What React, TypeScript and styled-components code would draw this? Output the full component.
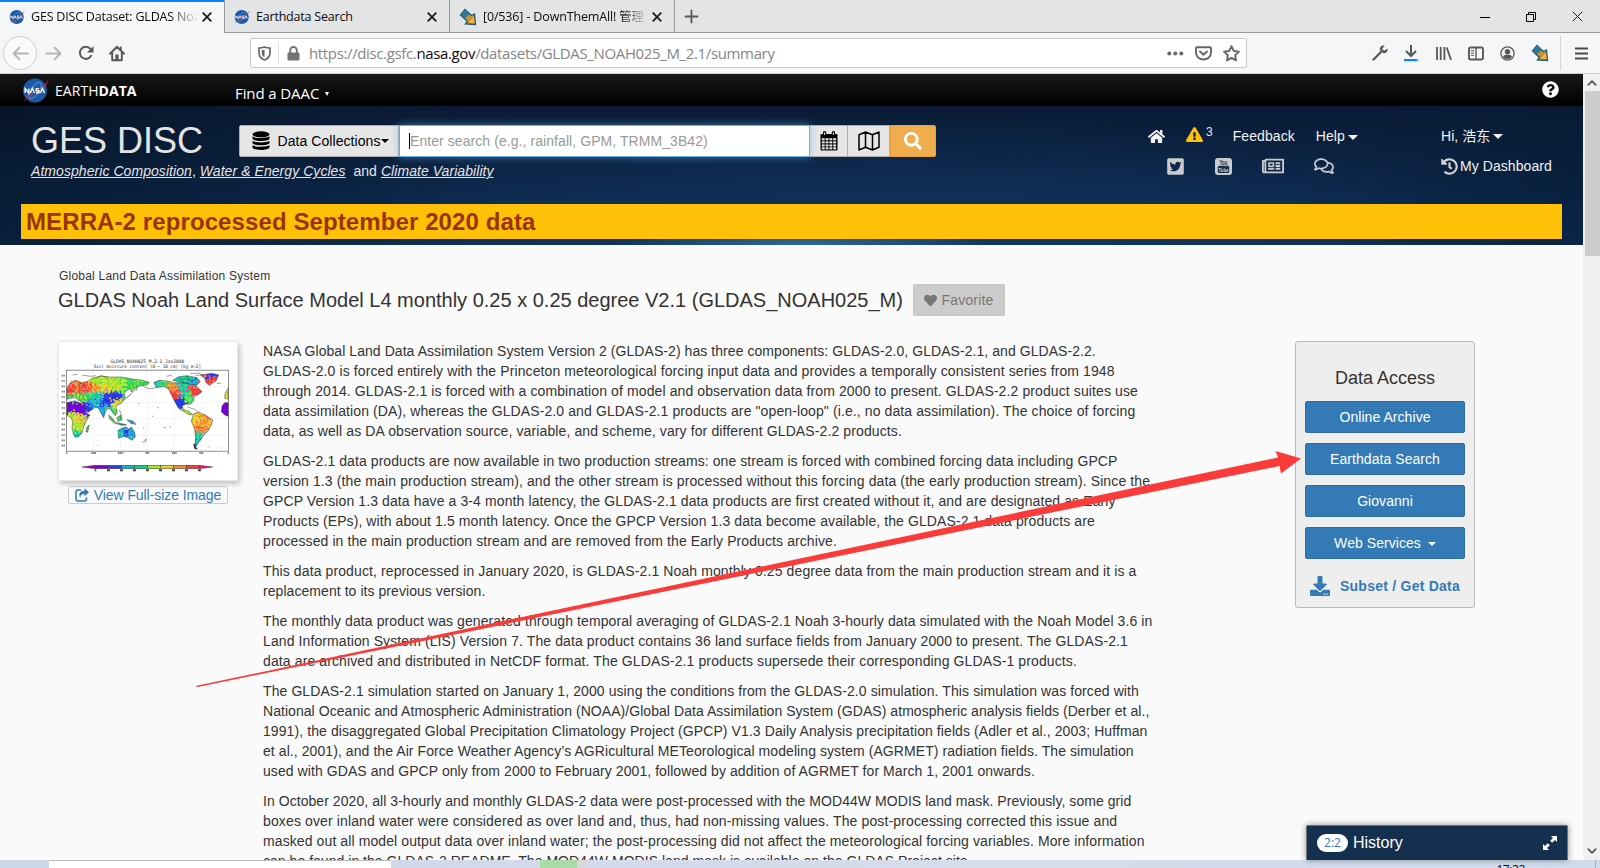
import React from "react";
import styled, { createGlobalStyle, css } from "styled-components";
import {
  FaDownload,
  FaExclamationTriangle,
  FaHeart,
  FaHistory,
  FaHome,
  FaQuestionCircle,
  FaRegComments,
  FaRegNewspaper,
  FaSearch,
  FaTwitterSquare,
} from "react-icons/fa";

const ARIAL = `"Liberation Sans", "Noto Sans CJK SC", sans-serif`;
const CHROME = `"Open Sans", "Noto Sans CJK SC", sans-serif`;

const Global = createGlobalStyle`
  * { box-sizing: border-box; }
  html, body { margin: 0; padding: 0; overflow: hidden; }
  body { font-family: ${ARIAL}; font-size: 14px; line-height: 20px; color: #333; }
  svg { display: block; flex: none; }
  p { margin: 0; }
`;

const Window = styled.div`
  width: 1600px;
  height: 868px;
  display: flex;
  flex-direction: column;
  overflow: hidden;
  background: #f5f6f7;
`;

/* ---------- browser chrome ---------- */

const TabStrip = styled.div`
  height: 33px;
  flex: none;
  display: flex;
  background: #e3e4e6;
  box-shadow: inset 0 -1px #98999b;
  font-family: ${CHROME};
`;

const Tab = styled.div<{ $w: number; $active?: boolean }>`
  width: ${(p) => p.$w}px;
  height: 33px;
  display: flex;
  align-items: center;
  padding: 1px 12px 0 9px;
  border-right: 1px solid #98999b;
  color: #0c0c0d;
  ${(p) =>
    p.$active &&
    css`
      background: #f5f6f7;
      box-shadow: inset 0 2px #0a84ff;
    `}
`;

const TabTitle = styled.span<{ $track: number; $fade?: boolean }>`
  flex: 1;
  min-width: 0;
  margin: 0 4px 0 6px;
  overflow: hidden;
  white-space: nowrap;
  font-size: 12.5px;
  letter-spacing: ${(p) => p.$track}px;
  ${(p) => p.$fade && css`mask-image: linear-gradient(to right, #000 calc(100% - 28px), transparent);`}
`;

const NewTab = styled.div`
  display: flex;
  align-items: center;
  padding-left: 9px;
`;

const WindowButtons = styled.div`
  margin-left: auto;
  display: flex;
  align-items: center;
  gap: 36px;
  padding-right: 17px;
`;

const Toolbar = styled.div`
  height: 41px;
  flex: none;
  display: flex;
  align-items: center;
  padding-left: 3px;
  background: #f5f6f7;
  border-bottom: 1px solid #ccc;
`;

const BackButton = styled.div`
  width: 34px;
  height: 34px;
  border: 1px solid #d0d0d2;
  border-radius: 50%;
  background: #fafafb;
  display: flex;
  align-items: center;
  justify-content: center;
`;

const NavIcons = styled.div`
  display: flex;
  align-items: center;
  gap: 15.5px;
  margin-left: 8px;
  width: 205px;
`;

const UrlBox = styled.div`
  width: 997px;
  height: 30px;
  display: flex;
  align-items: center;
  border: 1px solid #c8c8ca;
  border-radius: 2px;
  background: #fff;
  padding: 0 6px 0 7px;
  font-family: ${CHROME};
`;

const UrlDivider = styled.i`
  width: 1px;
  height: 22px;
  background: #e0e0e2;
  margin: 0 8px 0 7px;
`;

const Url = styled.span`
  flex: 1;
  margin-left: 9px;
  padding-bottom: 1px;
  font-size: 15px;
  letter-spacing: -0.36px;
  color: #858587;
  white-space: nowrap;
  b { color: #0c0c0d; font-weight: 400; }
`;

const UrlActions = styled.div`
  display: flex;
  align-items: center;
  gap: 11px;
`;

const ToolIcons = styled.div`
  margin-left: auto;
  display: flex;
  align-items: center;
  gap: 16px;
`;

const MenuButton = styled.div`
  height: 34px;
  border-left: 1px solid #d5d5d8;
  padding: 0 12px 0 14px;
  margin-left: -5px;
  display: flex;
  align-items: center;
`;

/* ---------- page ---------- */

const Viewport = styled.div`
  height: 786px;
  flex: none;
  display: flex;
  overflow: hidden;
`;

const Page = styled.div`
  width: 1583px;
  background: #fafafa;
  display: flex;
  flex-direction: column;
  overflow: hidden;
`;

const ScrollBar = styled.div`
  width: 17px;
  background: #f0f0f0;
  display: flex;
  flex-direction: column;
  align-items: center;
  padding: 3px 0 3px 1px;
`;

const ScrollThumb = styled.div`
  width: 15px;
  height: 165px;
  margin: 2px 0 auto;
  background: #cdcdcd;
`;

const EarthBar = styled.div`
  height: 32px;
  flex: none;
  display: flex;
  align-items: center;
  padding: 1px 24px 0 22px;
  background: linear-gradient(#181818, #000);
  color: #fff;
  font-family: ${CHROME};
  > svg:last-child { margin-bottom: 3px; }
`;

const Brand = styled.span`
  width: 180px;
  margin-left: 6px;
  font-size: 14px;
  letter-spacing: 0.05px;
`;

const Daac = styled.span`
  display: flex;
  align-items: center;
  gap: 6px;
  flex: 1;
  font-size: 15px;
  letter-spacing: -0.1px;
  padding-top: 4px;
`;

const Caret = styled.i<{ $s?: number; $gap?: number }>`
  display: inline-block;
  width: 0;
  height: 0;
  vertical-align: middle;
  margin-left: ${(p) => p.$gap ?? 0}px;
  border-top: ${(p) => p.$s ?? 4}px solid currentColor;
  border-left: ${(p) => p.$s ?? 4}px solid transparent;
  border-right: ${(p) => p.$s ?? 4}px solid transparent;
`;

const DaacCaret = styled(Caret)`
  margin-top: 2px;
  border-width: 4px 2.5px 0;
`;

const Header = styled.header`
  height: 139px;
  flex: none;
  display: flex;
  flex-direction: column;
  justify-content: space-between;
  padding: 19px 21px 6px;
  color: #fff;
  background:
    radial-gradient(ellipse 190px 34px at 800px 142px, rgba(58, 124, 170, 0.75), transparent),
    radial-gradient(ellipse 640px 130px at 900px 139px, rgba(28, 74, 130, 0.4), transparent),
    linear-gradient(100deg, rgba(0, 10, 20, 0.35), transparent 30%, transparent 85%, rgba(0, 20, 40, 0.3)),
    linear-gradient(#0a1c36, #0d2c54);
`;

const HeaderRow = styled.div`
  display: flex;
`;

const SiteColumn = styled.div`
  width: 1127px;
  padding-left: 10px;
`;

const SearchRow = styled.div`
  display: flex;
  height: 32px;
`;

const SiteName = styled.h1`
  width: 208px;
  margin: 0;
  font-size: 36px;
  line-height: 32px;
  font-weight: 400;
  color: #e4e4e4;
`;

const SearchButton = styled.div<{ $w: number; $primary?: boolean }>`
  width: ${(p) => p.$w}px;
  display: flex;
  align-items: center;
  justify-content: center;
  letter-spacing: 0.07px;
  color: ${(p) => (p.$primary ? "#fff" : "#000")};
  background: ${(p) => (p.$primary ? "#f0ad4e" : "#e6e6e6")};
  border: 1px solid ${(p) => (p.$primary ? "#eea236" : "#adadad")};
  border-left-width: ${(p) => (p.$primary ? 1 : 0)}px;
  &:first-of-type { border-left-width: 1px; border-radius: 2px 0 0 2px; padding-left: 3px; }
  &:last-of-type { border-radius: 0 2px 2px 0; }
  svg + span { margin-left: 7px; }
`;

const SearchField = styled.div`
  width: 411px;
  position: relative;
  background: #fff;
  border: 1px solid #66afe9;
  box-shadow: 0 0 8px rgba(102, 175, 233, 0.6);
  padding: 5px 9px;
  color: #999;
  letter-spacing: 0.07px;
  display: flex;
  align-items: center;
`;

const TextCursor = styled.i`
  width: 1px;
  height: 16px;
  background: #000;
`;

const Tagline = styled.div`
  margin-top: 4px;
  white-space: pre;
  color: #e4e4e4;
  letter-spacing: 0.06px;
  a { font-style: italic; text-decoration: underline; }
`;

const LinkColumn = styled.div`
  width: 293px;
  display: flex;
  flex-direction: column;
  gap: 10px;
  padding-top: 1px;
`;

const LinkRow = styled.div<{ $gap: number; $indent?: number }>`
  display: flex;
  align-items: center;
  height: 20px;
  gap: ${(p) => p.$gap}px;
  padding-left: ${(p) => p.$indent ?? 0}px;
  color: #f2f2f2;
  letter-spacing: 0.07px;
`;

const SocialRow = styled(LinkRow)`
  color: #c9cbce;
`;

const AlertCount = styled.span`
  display: flex;
  gap: 3px;
  font-size: 12px;
  line-height: 12px;
  color: #e4e4e4;
  margin: -4px -1px 0 0;
  svg { color: #ffc107; }
`;

const UserColumn = styled(LinkColumn)`
  width: 120px;
`;

const Notice = styled.div`
  height: 35px;
  padding-left: 5px;
  background: #ffc107;
  color: #993300;
  font-size: 24px;
  line-height: 35px;
  letter-spacing: 0.1px;
  font-weight: 700;
`;

const Content = styled.main`
  flex: 1;
  padding: 21px 0 0 58px;
`;

const Project = styled.div`
  font-size: 12px;
  letter-spacing: 0.22px;
  padding-left: 1px;
`;

const TitleRow = styled.div`
  display: flex;
  align-items: center;
  margin-top: -2px;
  height: 32px;
`;

const Title = styled.h2`
  width: 855px;
  margin: 0;
  font-size: 20px;
  font-weight: 400;
  white-space: nowrap;
`;

const Favorite = styled.div`
  width: 92px;
  height: 32px;
  display: flex;
  align-items: center;
  justify-content: center;
  gap: 4px;
  background: #ccc;
  border: 1px solid #c6c6c6;
  border-radius: 1px;
  color: #777;
  letter-spacing: 0.2px;
`;

const Columns = styled.div`
  display: flex;
  align-items: flex-start;
  margin-top: 25px;
`;

const Preview = styled.div`
  width: 205px;
`;

const PreviewCard = styled.div`
  width: 180px;
  height: 140px;
  background: #fff;
  border: 1px solid #e8e8e8;
  box-shadow: 2px 3px 5px rgba(0, 0, 0, 0.22);
`;

const PreviewLink = styled.div`
  width: 160px;
  height: 18px;
  margin: 5px 0 0 10px;
  display: flex;
  align-items: center;
  justify-content: center;
  gap: 5px;
  border: 1px solid #ccc;
  border-radius: 2px;
  color: #337ab7;
  letter-spacing: -0.07px;
`;

const Description = styled.div`
  width: 1032px;
  white-space: pre;
  p + p { margin-top: 10px; }
`;

const Line = styled.span<{ $track: number }>`
  display: block;
  letter-spacing: ${(p) => p.$track}px;
`;

const AccessPanel = styled.aside`
  width: 180px;
  height: 267px;
  display: flex;
  flex-direction: column;
  gap: 10px;
  padding: 26px 9px 0;
  background: #eee;
  border: 1px solid #bbb;
  border-radius: 3px;
`;

const AccessTitle = styled.h3`
  margin: 0 0 3px;
  font-size: 18px;
  font-weight: 400;
  text-align: center;
`;

const AccessButton = styled.div`
  height: 32px;
  line-height: 31px;
  text-align: center;
  letter-spacing: 0.06px;
  color: #fff;
  background: #337ab7;
  border: 1px solid #2e6da4;
  border-radius: 2px;
`;

const SubsetLink = styled.div`
  display: flex;
  align-items: center;
  gap: 10px;
  margin-top: 7px;
  padding-left: 5px;
  color: #337ab7;
  font-weight: 700;
  letter-spacing: 0.24px;
  white-space: nowrap;
`;

const HistoryPanel = styled.div`
  position: absolute;
  left: 1306px;
  top: 825px;
  width: 262px;
  height: 35px;
  display: flex;
  align-items: center;
  padding: 0 9px 1px 10px;
  background: #15304f;
  border: 1px solid #6e7275;
  border-bottom: 0;
  border-radius: 2px 2px 0 0;
  box-shadow: 0 0 6px rgba(0, 0, 0, 0.4);
  color: #fff;
  font-size: 16px;
  > span { flex: 1; }
`;

const HistoryBadge = styled.b`
  width: 31px;
  height: 18px;
  margin-right: 5px;
  border-radius: 9px;
  background: #fff;
  color: #337ab7;
  font: 400 12px/18px "Open Sans", sans-serif;
  text-align: center;
`;

const ArrowOverlay = styled.svg`
  position: absolute;
  left: 0;
  top: 0;
  pointer-events: none;
`;

const TaskBar = styled.div`
  height: 8px;
  flex: none;
  display: flex;
  background: linear-gradient(90deg, #ccd7ea, #d6dcec 60%, #d0dcec);
  padding-left: 49px;
  overflow: hidden;
`;

const TaskItem = styled.div<{ $w: number; $c: string; $line?: boolean }>`
  width: ${(p) => p.$w}px;
  background: ${(p) => p.$c};
  border-top: ${(p) => (p.$line ? "1px solid #bbb" : "0")};
`;

const Clock = styled.span`
  margin-left: auto;
  margin-right: 4px;
  padding-right: 70px;
  border-right: 1px solid #a5afc0;
  font: 12px/14px "Open Sans", sans-serif;
  letter-spacing: -0.4px;
  color: #111;
  padding-top: 3px;
`;

/* ---------- icons ---------- */

const CloseX = ({ size = 10, w = 1.8 }: { size?: number; w?: number }) => (
  <svg width={size} height={size} viewBox="0 0 10 10" stroke="#1c1c1e" strokeWidth={w} fill="none">
    <path d="M.7.7l8.6 8.6M9.3.7L.7 9.3" />
  </svg>
);

const NasaLogo = ({ size }: { size: number }) => (
  <svg width={size} height={size} viewBox="0 0 26 26">
    <circle cx="12.5" cy="13" r="11.5" fill="#1a5aa8" />
    <ellipse cx="12.5" cy="13" rx="9" ry="4" fill="none" stroke="#8db4dd" strokeWidth=".6" transform="rotate(-55 12.5 13)" />
    <path d="M1 24C5 18 9 15.500 14 14 19 12 22 7 26 2 23 9 19 14 14 15.300 9 16.500 6 19 1 24z" fill="#e0283c" opacity=".85" />
    <path d="M3 15.500V11l3.500 4.500V11M8 15.500l2-4.500 2 4.500M16.300 11.200h-2.600v2h2.600v2h-2.800M17.700 15.500l2-4.500 2 4.500" fill="none" stroke="#fff" strokeWidth="1.300" />
  </svg>
);

const DtaArrow = () => (
  <svg width="18" height="18" viewBox="0 0 18 18">
    <path d="M6 1.500l6.500 6L15.500 6l1 10.500L6.500 16 8.500 13.500 1.500 7z" fill="#c98f3a" stroke="#1f5670" strokeWidth="1.300" />
    <path d="M6 1.500l4.500 4.200L5.500 10.500 1.500 7z" fill="#2c7a98" />
    <path d="M9.500 14.500l6 .8-.6-6.500z" fill="#ffb52e" />
  </svg>
);

const Glyph = ({ d, size = 17, w = 1.8, color = "#58585a" }: { d: string; size?: number; w?: number; color?: string }) => (
  <svg width={size} height={size} viewBox="0 0 16 16" fill="none" stroke={color} strokeWidth={w} strokeLinecap="round" strokeLinejoin="round">
    <path d={d} />
  </svg>
);

const Reload = () => (
  <svg width="16" height="16" viewBox="0 0 16 16" fill="none" stroke="#58585a" strokeWidth="2">
    <path d="M13.500 10A6 6 0 1 1 12.500 4" />
    <path d="M15.500 1v6.500H9z" fill="#58585a" stroke="none" />
  </svg>
);

const HomeOutline = () => (
  <svg width="16" height="17" viewBox="0 0 16 17">
    <path d="M1 8.700L8 1.800l7 6.900M3.200 7v8.200h9.600V7M11.800 2.500v3" fill="none" stroke="#58585a" strokeWidth="1.900" strokeLinejoin="round" strokeLinecap="round" />
    <path d="M6.400 9.500h3.200V15H6.400z" fill="#58585a" />
  </svg>
);

const Shield = () => (
  <svg width="13" height="15" viewBox="0 0 13 15">
    <path d="M6.500 1C4.500 1.800 3 2 1 2v4.500C1 10 3 12.700 6.500 14 10 12.700 12 10 12 6.500V2C10 2 8.500 1.800 6.500 1z" fill="none" stroke="#66666a" strokeWidth="1.700" />
    <path d="M6.500 3.600c-1 .4-1.700.5-2.800.6v2.500c0 2.100 1 3.700 2.800 4.700z" fill="#66666a" />
  </svg>
);

const Lock = () => (
  <svg width="13" height="15" viewBox="0 0 13 15">
    <rect x=".5" y="6.500" width="12" height="8" rx="1.300" fill="#737376" />
    <path d="M3.200 7V4.300a3.300 3.300 0 0 1 6.600 0V7" fill="none" stroke="#737376" strokeWidth="2" />
  </svg>
);

const Pocket = () => (
  <svg width="17" height="15" viewBox="0 0 17 15" fill="none" stroke="#68686b" strokeWidth="1.900">
    <path d="M2 1.200h13q1 0 1 1V6.500a7.500 7 0 0 1-15 0V2.200q0-1 1-1z" />
    <path d="M5 5.500l3.500 3.200L12 5.500" strokeLinecap="round" strokeLinejoin="round" />
  </svg>
);

const Wrench = () => (
  <svg width="16" height="16" viewBox="0 0 16 16">
    <path d="M1.500 14.500L9 7" stroke="#58585a" strokeWidth="2.300" strokeLinecap="round" />
    <path d="M15.500 3.500l-2.700 2-2-.4-.3-1.900 2.200-2.500C9.800-.2 7.400 2 7.800 4.800l3.600 3.500c3 .3 4.800-2.200 4.100-4.800z" fill="#58585a" />
  </svg>
);

const DownloadArrow = () => (
  <svg width="16" height="18" viewBox="0 0 16 18">
    <path d="M7 1v11M2 7l5 5 5-5" fill="none" stroke="#58585a" strokeWidth="2" />
    <path d="M0 15h13v2.200H0z" fill="#0a84ff" />
    <path d="M13 15h2v2.200h-2z" fill="#ccc" />
  </svg>
);

const Library = () => (
  <svg width="16" height="15" viewBox="0 0 16 15" stroke="#58585a" strokeWidth="1.800">
    <path d="M1 1v13M4.700 1v13M8.400 1v13M10.800 1.500l4.200 12.500" />
  </svg>
);

const Sidebar = () => (
  <svg width="16" height="15" viewBox="0 0 16 15" fill="none" stroke="#58585a">
    <rect x="1" y="1.500" width="14" height="12" rx="1.500" strokeWidth="1.900" />
    <path d="M8 1.500v12" strokeWidth="1.400" />
    <path d="M3 4.700h3M3 7h3M3 9.300h3" strokeWidth="1" />
  </svg>
);

const Account = () => (
  <svg width="15" height="15" viewBox="0 0 15 15">
    <circle cx="7.500" cy="7.500" r="6.600" fill="none" stroke="#58585a" strokeWidth="1.300" />
    <circle cx="7.500" cy="5.800" r="2.700" fill="#58585a" />
    <path d="M2.800 10.500C4 9 6 8.800 7.500 8.800s3.500.2 4.700 1.700A5.400 5.400 0 0 1 7.500 13a5.400 5.400 0 0 1-4.700-2.500z" fill="#58585a" />
  </svg>
);

const Database = () => (
  <svg width="18" height="20" viewBox="0 0 18 20">
    <ellipse cx="9" cy="3.300" rx="8.500" ry="3" />
    <path d="M.5 5.300c2 2.300 15 2.300 17 0v2.400c-1 3-16 3-17 0z" />
    <path d="M.5 9.700c2 2.300 15 2.300 17 0v2.400c-1 3-16 3-17 0z" />
    <path d="M.5 14.100c2 2.300 15 2.300 17 0v2.400c-1 3.300-16 3.300-17 0z" />
  </svg>
);

const Calendar = () => (
  <svg width="18" height="20" viewBox="0 0 18 20">
    <path d="M1.500 3h15q1 0 1 1v14.500q0 1-1 1h-15q-1 0-1-1V4q0-1 1-1z" />
    <path d="M3.500.8h2.200v4H3.500zM12.300.8h2.200v4h-2.200z" stroke="#000" />
    <path d="M4.600 1.500v2.500M13.400 1.500v2.500" stroke="#e6e6e6" />
    <g fill="#e6e6e6">
      {[7.2, 10.3, 13.4, 16.3].map((y) =>
        [1.8, 5.6, 9.4, 13.2].map((x) => <rect key={`${x}${y}`} x={x} y={y} width="2.900" height="2.100" />)
      )}
    </g>
  </svg>
);

const FoldedMap = () => (
  <svg width="22" height="20" viewBox="0 0 22 20" fill="none" stroke="#000" strokeWidth="1.500" strokeLinejoin="round">
    <path d="M1 3.700L7.500 1 14.500 3.700 21 1v15.300L14.500 19 7.500 16.300 1 19zM7.500 1v15.300M14.500 3.700V19" />
  </svg>
);

const YouTubeSquare = () => (
  <svg width="17" height="17" viewBox="0 0 17 17">
    <rect width="17" height="17" rx="3" fill="#c9cbce" />
    <rect x="2.800" y="7.800" width="11.400" height="7.200" rx="1.500" fill="#18304f" />
    <text x="8.500" y="6.900" fontSize="6.500" fontWeight="700" textAnchor="middle" textLength="8" lengthAdjust="spacingAndGlyphs" fill="#18304f">You</text>
    <text x="8.500" y="13.800" fontSize="6.200" fontWeight="700" textAnchor="middle" textLength="10" lengthAdjust="spacingAndGlyphs" fill="#c9cbce">Tube</text>
  </svg>
);

const ShareSquare = () => (
  <svg width="14" height="14" viewBox="0 0 14 14">
    <path d="M6 2H3Q1 2 1 4v7q0 2 2 2h6.500q2 0 2-2V9.500" fill="none" stroke="#337ab7" strokeWidth="1.500" />
    <path d="M9.500.3L14 4.300 9.500 8.300V6C6.500 6 5.300 7 5.300 10 3 6 5 2.700 9.500 2.700z" fill="#337ab7" />
  </svg>
);

const ExpandArrows = () => (
  <svg width="16" height="16" viewBox="0 0 16 16" fill="#fff">
    <path d="M9 1h6v6l-2-2-2.800 2.800-2-2L11 3zM7 15H1V9l2 2 2.800-2.800 2 2L5 13z" />
  </svg>
);

/* ---------- soil moisture preview ---------- */

const LAND = [
  "34,195 60,189 75,196 84,196 88,210 96,228 104,232 98,242 90,255 84,270 80,285 70,297 60,299 54,290 50,270 52,255 48,240 34,233",
  "34,185 34,158 38,145 48,132 62,128 80,135 100,130 110,122 135,115 165,118 200,118 230,124 260,128 282,134 275,142 255,144 240,150 228,163 224,152 212,160 206,168 210,180 200,195 190,200 181,208 186,222 180,234 172,225 165,215 158,212 150,222 145,240 138,228 130,212 118,208 112,215 98,224 90,215 82,195 70,188 60,180 46,182",
  "188,278 200,272 212,268 220,275 228,268 238,285 240,298 230,308 218,300 205,296 190,302",
  "295,135 310,128 335,130 355,135 385,135 405,140 420,142 440,162 430,170 418,175 414,190 405,200 392,199 380,205 385,216 400,220 412,231 400,231 380,218 370,212 360,195 350,175 340,155 325,146 304,150",
  "435,112 470,107 490,112 482,130 462,143 452,135 448,122",
  "352,128 370,117 395,114 425,120 435,132 425,142 400,138 370,132",
  "415,228 430,224 450,232 472,247 468,262 458,280 445,292 435,308 427,318 419,332 421,300 418,275 408,250",
  "500,205 508,195 519,195 519,236 508,232 498,222",
  "509,168 519,150 519,185 508,182",
  "95,268 102,262 97,284 92,282",
  "160,232 170,240 180,254 174,252 164,242",
  "185,240 196,233 198,246 188,252",
  "215,246 232,250 242,260 228,258",
  "180,255 200,258 214,262 200,262",
];

const PALETTE = ["#7a00d8", "#2a3cf0", "#12a5e0", "#0bc8a8", "#35d84a", "#a4e620", "#e8d428", "#f58a28", "#f53a3a"];

// Wetness centres: x, y, palette index.
const CENTRES: [number, number, number][] = [
  [45, 212, 0], [75, 212, 0], [100, 212, 1], [66, 242, 6], [60, 265, 5], [66, 290, 3], [45, 232, 5],
  [45, 152, 8], [62, 142, 7], [85, 152, 8], [110, 146, 7], [140, 148, 6], [60, 172, 4], [92, 172, 4], [110, 192, 2],
  [120, 130, 5], [170, 128, 5], [190, 150, 5], [225, 135, 4], [265, 135, 4], [125, 172, 3], [155, 180, 1], [185, 172, 1],
  [150, 192, 1], [186, 195, 6], [138, 212, 2], [205, 160, 4], [172, 215, 4],
  [195, 285, 3], [213, 286, 1], [232, 285, 2], [230, 300, 3],
  [300, 138, 3], [325, 138, 4], [350, 150, 7], [357, 162, 8], [380, 145, 3], [405, 155, 8], [425, 160, 8], [400, 180, 4],
  [372, 188, 1], [375, 200, 1], [395, 165, 3], [400, 228, 5], [462, 115, 1], [470, 128, 8], [450, 125, 8],
  [385, 120, 3], [410, 130, 2], [425, 238, 6], [445, 245, 7], [440, 270, 7], [460, 258, 6], [430, 295, 3], [424, 315, 2],
  [510, 215, 0], [515, 165, 6],
];

const noise = (x: number, y: number) => {
  const n = Math.sin(x * 12.9898 + y * 78.233) * 43758.5453;
  return n - Math.floor(n);
};

const moistureCells = () => {
  const paths = PALETTE.map(() => "");
  for (let y = 104; y < 336; y += 4) {
    for (let x = 34; x < 519; x += 4) {
      const jx = x + (noise(x, y) - 0.5) * 20;
      const jy = y + (noise(y, x) - 0.5) * 16;
      let best = 0;
      let dist = Infinity;
      for (const [cx, cy, level] of CENTRES) {
        const d = (cx - jx) ** 2 + (cy - jy) ** 2 * 1.4;
        if (d < dist) {
          dist = d;
          best = level;
        }
      }
      const r = noise(x + 7, y + 3);
      const shift = best < 2 ? 0 : r < 0.16 ? -1 : r > 0.84 ? 1 : 0;
      const level = Math.max(0, Math.min(8, best + shift));
      paths[level] += `M${x} ${y}h4.300v4.300h-4.300z`;
    }
  }
  return paths;
};

const CELLS = moistureCells();

const SoilMap = () => (
  <svg width="178" height="138" viewBox="11 13 534 414">
    <defs>
      <clipPath id="land">
        {LAND.map((points) => (
          <polygon key={points} points={points} />
        ))}
      </clipPath>
    </defs>
    <g fontFamily="DejaVu Sans Mono" fontSize="14" fill="#333" textAnchor="middle">
      <text x="276" y="75" textLength="221" lengthAdjust="spacingAndGlyphs">GLDAS_NOAH025_M.2.1 Jan2000</text>
      <text x="276" y="90" textLength="322" lengthAdjust="spacingAndGlyphs">Soil moisture content (0 − 10 cm) [kg m−2]</text>
    </g>
    <path d="M114 98V340M195 98V340M276 98V340M357 98V340M438 98V340M34 146H518M34 195H518M34 243H518M34 292H518" stroke="#eee" strokeWidth="2" />
    <g clipPath="url(#land)">
      {CELLS.map((d, i) => (
        <path key={PALETTE[i]} d={d} fill={PALETTE[i]} />
      ))}
    </g>
    <g fill="none" stroke="#222" strokeWidth="1.600" opacity=".8">
      {LAND.map((points) => (
        <polygon key={points} points={points} />
      ))}
      <path d="M66 145l8-10 10 6-6 12M120 122l18-8 20 6M205 188l8-6 14-12M214 180l14-12 18-20-4 12M262 144q20 16 42 4M160 240l14 16 30 8M192 216l6 14 2 20M396 208l20 6 16 10M370 120l12 10 14-14 10 16 18-8M175 172l10 16 14-10M140 180l20 12 18-18M260 315l8-6 4-6-2 12M52 112l14-2M350 112l-16 4M405 108l30-2M484 138l14-2M80 112l26 4 16-2M440 110l-20 4" />
      <path d="M416 318l4 14 6 1" strokeWidth="5" stroke="#000" />
    </g>
    <path d="M305 210h5M262 270h5M325 270h7M248 198h4M460 328h4M126 323h3M342 268h5M290 236h4M496 331h4" stroke="#777" strokeWidth="2" />
    <rect x="33.500" y="97.500" width="486" height="243" fill="none" stroke="#555" strokeWidth="2" />
    <path d="M19 114h11M19 130h11M19 146h11M19 162h11M19 178h11M19 194h11M19 211h11M22 227h8M19 243h11M19 260h11M19 276h11M19 292h11M19 308h11M19 324h11" stroke="#777" strokeWidth="5" strokeDasharray="4 1.500" />
    <path d="M32 346h4M108 346h14M188 346h16M270 346h12M350 346h14M432 346h12M517 346h4" stroke="#555" strokeWidth="4" strokeDasharray="4 1" />
    <g stroke="#333" strokeWidth="1.500">
      <path d="M80 388l40-5v10z" fill="#9b00b0" />
      {["#7a00d8", "#2a3cf0", "#0bb4d0", "#0bd088", "#a4e620", "#e8d428", "#f58a28", "#f53a3a"].map((c, i) => (
        <rect key={c} x={120 + i * 39} y="383" width="39" height="10" fill={c} />
      ))}
      <path d="M472 388l-40-5v10z" fill="#f0107c" />
    </g>
    <path d="M118 398h5M155 398h9M194 398h9M233 398h9M272 398h9M311 398h9M350 398h9M389 398h9M428 398h9" stroke="#444" strokeWidth="6" />
  </svg>
);

/* ---------- content ---------- */

// Each line of the description with its letter spacing in pixels.
const PARAGRAPHS: [string, number][][] = [
  [
    ["NASA Global Land Data Assimilation System Version 2 (GLDAS-2) has three components: GLDAS-2.0, GLDAS-2.1, and GLDAS-2.2.", 0.06],
    ["GLDAS-2.0 is forced entirely with the Princeton meteorological forcing input data and provides a temporally consistent series from 1948", 0.1],
    ["through 2014. GLDAS-2.1 is forced with a combination of model and observation data from 2000 to present. GLDAS-2.2 product suites use", 0.107],
    ['data assimilation (DA), whereas the GLDAS-2.0 and GLDAS-2.1 products are "open-loop" (i.e., no data assimilation). The choice of forcing', 0.106],
    ["data, as well as DA observation source, variable, and scheme, vary for different GLDAS-2.2 products.", 0.112],
  ],
  [
    ["GLDAS-2.1 data products are now available in two production streams: one stream is forced with combined forcing data including GPCP", 0.077],
    ["version 1.3 (the main production stream), and the other stream is processed without this forcing data (the early production stream). Since the", 0.115],
    ["GPCP Version 1.3 data have a 3-4 month latency, the GLDAS-2.1 data products are first created without it, and are designated as Early", 0.107],
    ["Products (EPs), with about 1.5 month latency. Once the GPCP Version 1.3 data become available, the GLDAS-2.1 data products are", 0.09],
    ["processed in the main production stream and are removed from the Early Products archive.", 0.093],
  ],
  [
    ["This data product, reprocessed in January 2020, is GLDAS-2.1 Noah monthly 0.25 degree data from the main production stream and it is a", 0.107],
    ["replacement to its previous version.", 0.06],
  ],
  [
    ["The monthly data product was generated through temporal averaging of GLDAS-2.1 Noah 3-hourly data simulated with the Noah Model 3.6 in", 0.092],
    ["Land Information System (LIS) Version 7. The data product contains 36 land surface fields from January 2000 to present. The GLDAS-2.1", 0.1],
    ["data are archived and distributed in NetCDF format. The GLDAS-2.1 products supersede their corresponding GLDAS-1 products.", 0.117],
  ],
  [
    ["The GLDAS-2.1 simulation started on January 1, 2000 using the conditions from the GLDAS-2.0 simulation. This simulation was forced with", 0.092],
    ["National Oceanic and Atmospheric Administration (NOAA)/Global Data Assimilation System (GDAS) atmospheric analysis fields (Derber et al.,", 0.052],
    ["1991), the disaggregated Global Precipitation Climatology Project (GPCP) V1.3 Daily Analysis precipitation fields (Adler et al., 2003; Huffman", 0.087],
    ["et al., 2001), and the Air Force Weather Agency’s AGRicultural METeorological modeling system (AGRMET) radiation fields. The simulation", 0.075],
    ["used with GDAS and GPCP only from 2000 to February 2001, followed by addition of AGRMET for March 1, 2001 onwards.", 0.072],
  ],
  [
    ["In October 2020, all 3-hourly and monthly GLDAS-2 data were post-processed with the MOD44W MODIS land mask. Previously, some grid", 0.056],
    ["boxes over inland water were considered as over land and, thus, had non-missing values. The post-processing corrected this issue and", 0.13],
    ["masked out all model output data over inland water; the post-processing did not affect the meteorological forcing variables. More information", 0.1],
    ["can be found in the GLDAS-2 README. The MOD44W MODIS land mask is available on the GLDAS Project site.", 0.03],
  ],
];

const BrowserChrome = () => (
  <>
    <TabStrip>
      <Tab $w={225} $active>
        <NasaLogo size={16} />
        <TabTitle $track={-0.2} $fade>GES DISC Dataset: GLDAS Noah</TabTitle>
        <CloseX />
      </Tab>
      <Tab $w={225}>
        <NasaLogo size={16} />
        <TabTitle $track={-0.2}>Earthdata Search</TabTitle>
        <CloseX />
      </Tab>
      <Tab $w={225}>
        <DtaArrow />
        <TabTitle $track={-0.15} $fade>[0/536] - DownThemAll! 管理</TabTitle>
        <CloseX />
      </Tab>
      <NewTab>
        <Glyph d="M8 1.500v13M1.500 8h13" size={15} w={1.9} />
      </NewTab>
      <WindowButtons>
        <svg width="10" height="10"><path d="M0 5.500h10" stroke="#000" /></svg>
        <svg width="10" height="10" fill="none" stroke="#000">
          <path d="M.5 2.500h7v7h-7zM2.500 2.500v-2h7v7h-2" />
        </svg>
        <CloseX w={0.9} size={11} />
      </WindowButtons>
    </TabStrip>
    <Toolbar>
      <BackButton>
        <Glyph d="M15 8H1.500M7 2.500L1.500 8 7 13.500" color="#b4b4b6" />
      </BackButton>
      <NavIcons>
        <Glyph d="M1 8h13.500M9 2.500L14.500 8 9 13.500" color="#b4b4b6" />
        <Reload />
        <HomeOutline />
      </NavIcons>
      <UrlBox>
        <Shield />
        <UrlDivider />
        <Lock />
        <Url>
          https://disc.gsfc.<b>nasa.gov</b>/datasets/GLDAS_NOAH025_M_2.1/summary
        </Url>
        <UrlActions>
          <svg width="17" height="5" fill="#68686b">
            <circle cx="2.300" cy="2.500" r="2" />
            <circle cx="8.300" cy="2.500" r="2" />
            <circle cx="14.300" cy="2.500" r="2" />
          </svg>
          <Pocket />
          <Glyph d="M8 1l2.100 4.600 4.900.6-3.600 3.400.9 4.900L8 12.100l-4.300 2.400.9-4.900L1 6.200l4.900-.6z" color="#68686b" />
        </UrlActions>
      </UrlBox>
      <ToolIcons>
        <Wrench />
        <DownloadArrow />
        <Library />
        <Sidebar />
        <Account />
        <DtaArrow />
        <MenuButton>
          <svg width="13" height="13" stroke="#4a4a4c" strokeWidth="2">
            <path d="M0 1.500h13M0 6.500h13M0 11.500h13" />
          </svg>
        </MenuButton>
      </ToolIcons>
    </Toolbar>
  </>
);

const SiteHeader = () => (
  <Header>
    <HeaderRow>
      <SiteColumn>
        <SearchRow>
          <SiteName>GES DISC</SiteName>
          <SearchButton $w={160}>
            <Database />
            <span>Data Collections</span>
            <Caret />
          </SearchButton>
          <SearchField>
            <TextCursor />
            Enter search (e.g., rainfall, GPM, TRMM_3B42)
          </SearchField>
          <SearchButton $w={38}>
            <Calendar />
          </SearchButton>
          <SearchButton $w={42}>
            <FoldedMap />
          </SearchButton>
          <SearchButton $w={46} $primary>
            <FaSearch size={18} />
          </SearchButton>
        </SearchRow>
        <Tagline>
          <a>Atmospheric Composition</a>, <a>Water &amp; Energy Cycles</a>
          {"  and "}
          <a>Climate Variability</a>
        </Tagline>
      </SiteColumn>
      <LinkColumn>
        <LinkRow $gap={21}>
          <FaHome size={17} />
          <AlertCount>
            <FaExclamationTriangle size={17} />
            <span>3</span>
          </AlertCount>
          <span>Feedback</span>
          <span>
            Help
            <Caret $s={5} $gap={3} />
          </span>
        </LinkRow>
        <SocialRow $gap={30} $indent={18}>
          <FaTwitterSquare size={19} />
          <YouTubeSquare />
          <FaRegNewspaper size={22} />
          <FaRegComments size={20} />
        </SocialRow>
      </LinkColumn>
      <UserColumn>
        <LinkRow $gap={3}>
          <span>Hi, 浩东</span>
          <Caret $s={5} />
        </LinkRow>
        <LinkRow $gap={2}>
          <FaHistory size={17} color="#d0d2d4" />
          <span>My Dashboard</span>
        </LinkRow>
      </UserColumn>
    </HeaderRow>
    <Notice>MERRA-2 reprocessed September 2020 data</Notice>
  </Header>
);

export default function App() {
  return (
    <Window>
      <Global />
      <BrowserChrome />
      <Viewport>
        <Page>
          <EarthBar>
            <NasaLogo size={27} />
            <Brand>
              EARTH<b>DATA</b>
            </Brand>
            <Daac>
              Find a DAAC <DaacCaret />
            </Daac>
            <FaQuestionCircle size={17} />
          </EarthBar>
          <SiteHeader />
          <Content>
            <Project>Global Land Data Assimilation System</Project>
            <TitleRow>
              <Title>GLDAS Noah Land Surface Model L4 monthly 0.25 x 0.25 degree V2.1 (GLDAS_NOAH025_M)</Title>
              <Favorite>
                <FaHeart size={13} />
                Favorite
              </Favorite>
            </TitleRow>
            <Columns>
              <Preview>
                <PreviewCard>
                  <SoilMap />
                </PreviewCard>
                <PreviewLink>
                  <ShareSquare />
                  View Full-size Image
                </PreviewLink>
              </Preview>
              <Description>
                {PARAGRAPHS.map((lines, i) => (
                  <p key={i}>
                    {lines.map(([text, track]) => (
                      <Line key={text} $track={track}>
                        {text}
                      </Line>
                    ))}
                  </p>
                ))}
              </Description>
              <AccessPanel>
                <AccessTitle>Data Access</AccessTitle>
                <AccessButton>Online Archive</AccessButton>
                <AccessButton>Earthdata Search</AccessButton>
                <AccessButton>Giovanni</AccessButton>
                <AccessButton>
                  Web Services <Caret $gap={3} />
                </AccessButton>
                <SubsetLink>
                  <FaDownload size={20} />
                  Subset / Get Data
                </SubsetLink>
              </AccessPanel>
            </Columns>
          </Content>
        </Page>
        <ScrollBar>
          <Glyph d="M3 10.500l5-5 5 5" size={12} w={2.4} />
          <ScrollThumb />
          <Glyph d="M3 5.500l5 5 5-5" size={12} w={2.4} />
        </ScrollBar>
      </Viewport>
      <HistoryPanel>
        <HistoryBadge>2:2</HistoryBadge>
        <span>History</span>
        <ExpandArrows />
      </HistoryPanel>
      <TaskBar>
        <TaskItem $w={342} $c="#fff" $line />
        <TaskItem $w={149} $c="transparent" />
        <TaskItem $w={37} $c="#a9dba9" />
        <TaskItem $w={11} $c="#d6d8dc" />
        <Clock>17:22</Clock>
      </TaskBar>
      <ArrowOverlay width="1600" height="868" viewBox="0 0 1600 868">
        <path d="M196.500 685.800L1278 457.500 1275.500 451 1301 458.500 1281 473.500 1279.500 466 196.500 687.200z" fill="#fb3b3a" />
      </ArrowOverlay>
    </Window>
  );
}
